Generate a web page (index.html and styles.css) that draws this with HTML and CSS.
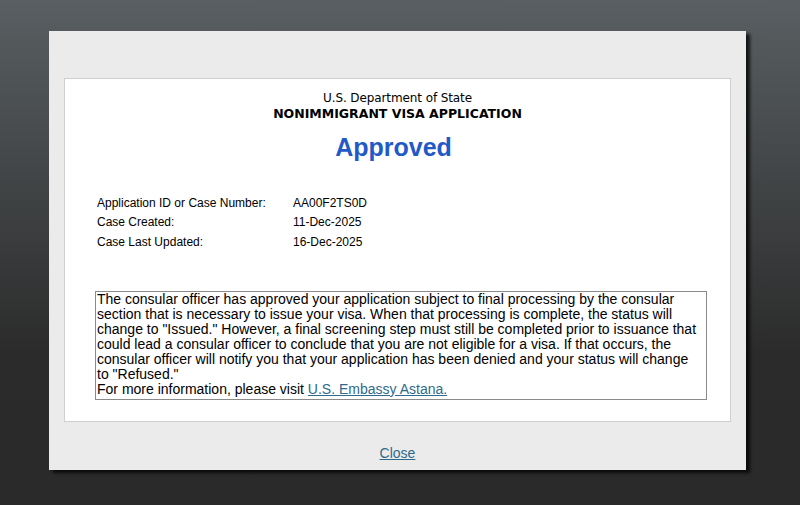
FILE: index.html
```html
<!DOCTYPE html>
<html lang="en">
<head>
    <meta charset="UTF-8">
    <title>Visa Status</title>
    <link rel="stylesheet" href="styles.css">
</head>
<body>

<div class="dialog">
    <div class="panel">
        <div class="agency">U.S. Department of State</div>
        <div class="form-title">NONIMMIGRANT VISA APPLICATION</div>
        <div class="status">Approved</div>

        <table class="case-info">
            <tr>
                <td class="label">Application ID or Case Number:</td>
                <td>AA00F2TS0D</td>
            </tr>
            <tr>
                <td class="label">Case Created:</td>
                <td>11-Dec-2025</td>
            </tr>
            <tr>
                <td class="label">Case Last Updated:</td>
                <td>16-Dec-2025</td>
            </tr>
        </table>

        <div class="message">
            The consular officer has approved your application subject to final processing by the consular section that is necessary to issue your visa. When that processing is complete, the status will change to "Issued." However, a final screening step must still be completed prior to issuance that could lead a consular officer to conclude that you are not eligible for a visa. If that occurs, the consular officer will notify you that your application has been denied and your status will change to "Refused."<br>
            For more information, please visit <a href="#">U.S. Embassy Astana.</a>
        </div>
    </div>
    <div class="actions">
        <a href="#">Close</a>
    </div>
</div>

</body>
</html>
```

FILE: styles.css
```css
html, body {
    height: 100%;
}

body {
    margin: 0;
    background: linear-gradient(#595f62, #2b2b2b 70%, #2a2a2a);
    font-family: 'Liberation Sans', Arial, sans-serif;
    color: #000;
    overflow: hidden;
}

.dialog {
    width: 697px;
    height: 439px;
    margin: 31px 0 0 49px;
    background-color: #ebebeb;
    box-shadow: 4px 3px 3px rgba(0, 0, 0, 0.75);
    box-sizing: border-box;
    padding: 47px 15px 0 15px;
}

.panel {
    background-color: #fff;
    border: 1px solid #cfcfcf;
    height: 344px;
    box-sizing: border-box;
    padding-top: 11px;
}

.agency {
    font-family: 'DejaVu Sans', Verdana, sans-serif;
    font-size: 12px;
    text-align: center;
    letter-spacing: -0.1px;
    line-height: 16px;
}

.form-title {
    font-family: 'DejaVu Sans', Verdana, sans-serif;
    font-size: 12.5px;
    font-weight: bold;
    text-align: center;
    line-height: 16px;
}

.status {
    color: #1f5ac8;
    font-size: 25px;
    font-weight: bold;
    text-align: center;
    margin-top: 10px;
    padding-right: 8px;
    line-height: 30px;
}

.case-info {
    border-collapse: collapse;
    margin: 31px 0 0 30px;
    font-size: 12px;
}

.case-info td {
    padding: 0;
    height: 19.5px;
    vertical-align: middle;
}

.case-info .label {
    width: 196px;
    padding-left: 2px;
}

.message {
    margin: 39px 0 0 30px;
    border: 1px solid #8a8a8a;
    padding: 0 6px 2px 1px;
    font-size: 14px;
    line-height: 15px;
    width: 612px;
    box-sizing: border-box;
}

a {
    color: #2f6a8c;
}

.actions {
    text-align: center;
    padding-top: 23px;
    font-size: 14px;
}
```
